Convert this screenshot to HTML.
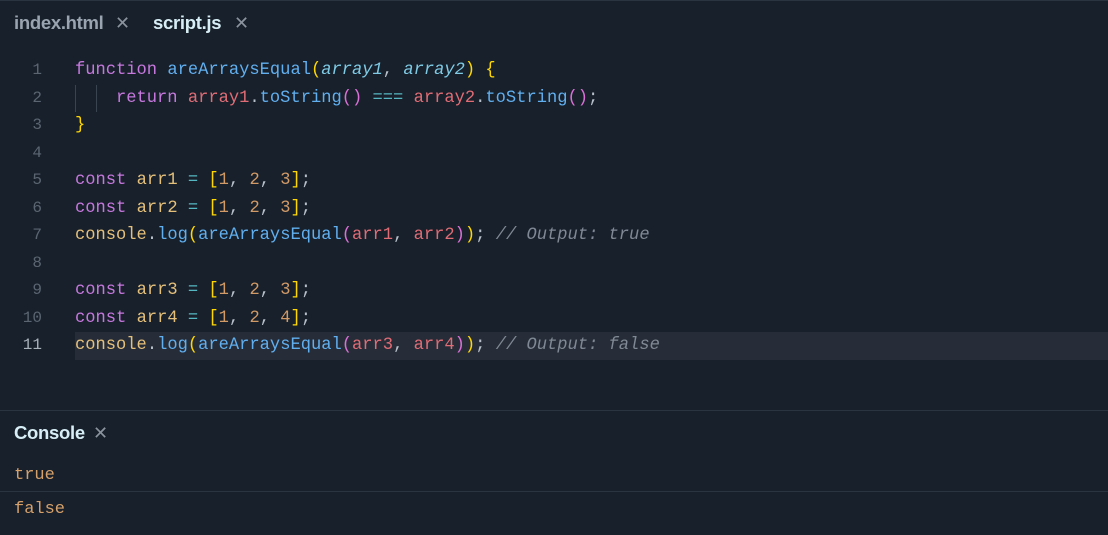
<!DOCTYPE html>
<html><head><meta charset="utf-8"><style>
html,body{margin:0;padding:0;width:1108px;height:535px;overflow:hidden;background:#17202b;}
body{font-family:"Liberation Sans",sans-serif;position:relative;}
.topline{position:absolute;left:0;top:0;width:1108px;height:1px;background:#2a3440;}
.tab{position:absolute;top:12px;font-size:18.5px;font-weight:bold;letter-spacing:-0.3px;}
.x{position:absolute;font-size:18px;color:#8a939e;font-weight:normal;}
.code{position:absolute;left:0;top:57px;font-family:"Liberation Mono",monospace;font-size:17.1px;width:1108px;}
.ln{position:absolute;left:0;width:42px;text-align:right;color:#5b6572;font-size:16px;}
.row{position:relative;height:27.5px;line-height:27.5px;}
.txt{position:absolute;left:75px;white-space:pre;}
.hl{background:#262d38;}
.k{color:#c678dd}.f{color:#61afef}.p{color:#7fcbe6;font-style:italic}.y{color:#ffd700}.m{color:#da70d6}
.r{color:#e06c75}.o{color:#56b6c2}.n{color:#d19a66}.v{color:#e5c07b}.c{color:#7f8894;font-style:italic}.w{color:#b8c0cc}
.guide{position:absolute;top:0;width:1px;height:27.5px;background:#3a4450;}
.sep{position:absolute;left:0;width:1108px;height:1px;background:#2a3440;}
.out{position:absolute;left:14px;font-family:"Liberation Mono",monospace;font-size:17px;color:#d6a06a;}
</style></head><body>
<div class="topline"></div>
<div class="tab" style="left:14px;color:#9aa4b0">index.html</div>
<div class="x" style="left:115px;top:13px">✕</div>
<div class="tab" style="left:153px;color:#d8eef6">script.js</div>
<div class="x" style="left:234px;top:13px">✕</div>
<div class="code">
<div class="row"><span class="ln">1</span><span class="txt"><span class="k">function</span> <span class="f">areArraysEqual</span><span class="y">(</span><span class="p">array1</span><span class="w">, </span><span class="p">array2</span><span class="y">)</span> <span class="y">{</span></span></div>
<div class="row"><span class="ln">2</span><span class="guide" style="left:75px"></span><span class="guide" style="left:96px"></span><span class="txt" style="left:116px"><span class="k">return</span> <span class="r">array1</span><span class="w">.</span><span class="f">toString</span><span class="m">()</span> <span class="o">===</span> <span class="r">array2</span><span class="w">.</span><span class="f">toString</span><span class="m">()</span><span class="w">;</span></span></div>
<div class="row"><span class="ln">3</span><span class="txt"><span class="y">}</span></span></div>
<div class="row"><span class="ln">4</span></div>
<div class="row"><span class="ln">5</span><span class="txt"><span class="k">const</span> <span class="v">arr1</span> <span class="o">=</span> <span class="y">[</span><span class="n">1</span><span class="w">, </span><span class="n">2</span><span class="w">, </span><span class="n">3</span><span class="y">]</span><span class="w">;</span></span></div>
<div class="row"><span class="ln">6</span><span class="txt"><span class="k">const</span> <span class="v">arr2</span> <span class="o">=</span> <span class="y">[</span><span class="n">1</span><span class="w">, </span><span class="n">2</span><span class="w">, </span><span class="n">3</span><span class="y">]</span><span class="w">;</span></span></div>
<div class="row"><span class="ln">7</span><span class="txt"><span class="v">console</span><span class="w">.</span><span class="f">log</span><span class="y">(</span><span class="f">areArraysEqual</span><span class="m">(</span><span class="r">arr1</span><span class="w">, </span><span class="r">arr2</span><span class="m">)</span><span class="y">)</span><span class="w">;</span> <span class="c">// Output: true</span></span></div>
<div class="row"><span class="ln">8</span></div>
<div class="row"><span class="ln">9</span><span class="txt"><span class="k">const</span> <span class="v">arr3</span> <span class="o">=</span> <span class="y">[</span><span class="n">1</span><span class="w">, </span><span class="n">2</span><span class="w">, </span><span class="n">3</span><span class="y">]</span><span class="w">;</span></span></div>
<div class="row"><span class="ln">10</span><span class="txt"><span class="k">const</span> <span class="v">arr4</span> <span class="o">=</span> <span class="y">[</span><span class="n">1</span><span class="w">, </span><span class="n">2</span><span class="w">, </span><span class="n">4</span><span class="y">]</span><span class="w">;</span></span></div>
<div class="row"><span class="ln" style="color:#a8b0ba">11</span><span class="txt hl" style="width:1033px"><span class="v">console</span><span class="w">.</span><span class="f">log</span><span class="y">(</span><span class="f">areArraysEqual</span><span class="m">(</span><span class="r">arr3</span><span class="w">, </span><span class="r">arr4</span><span class="m">)</span><span class="y">)</span><span class="w">;</span> <span class="c">// Output: false</span></span></div>
</div>
<div class="sep" style="top:410px"></div>
<div class="tab" style="left:14px;top:422px;color:#d8eef6">Console</div>
<div class="x" style="left:93px;top:423px">✕</div>
<div class="out" style="top:466px">true</div>
<div class="sep" style="top:491px"></div>
<div class="out" style="top:500px">false</div>
</body></html>
